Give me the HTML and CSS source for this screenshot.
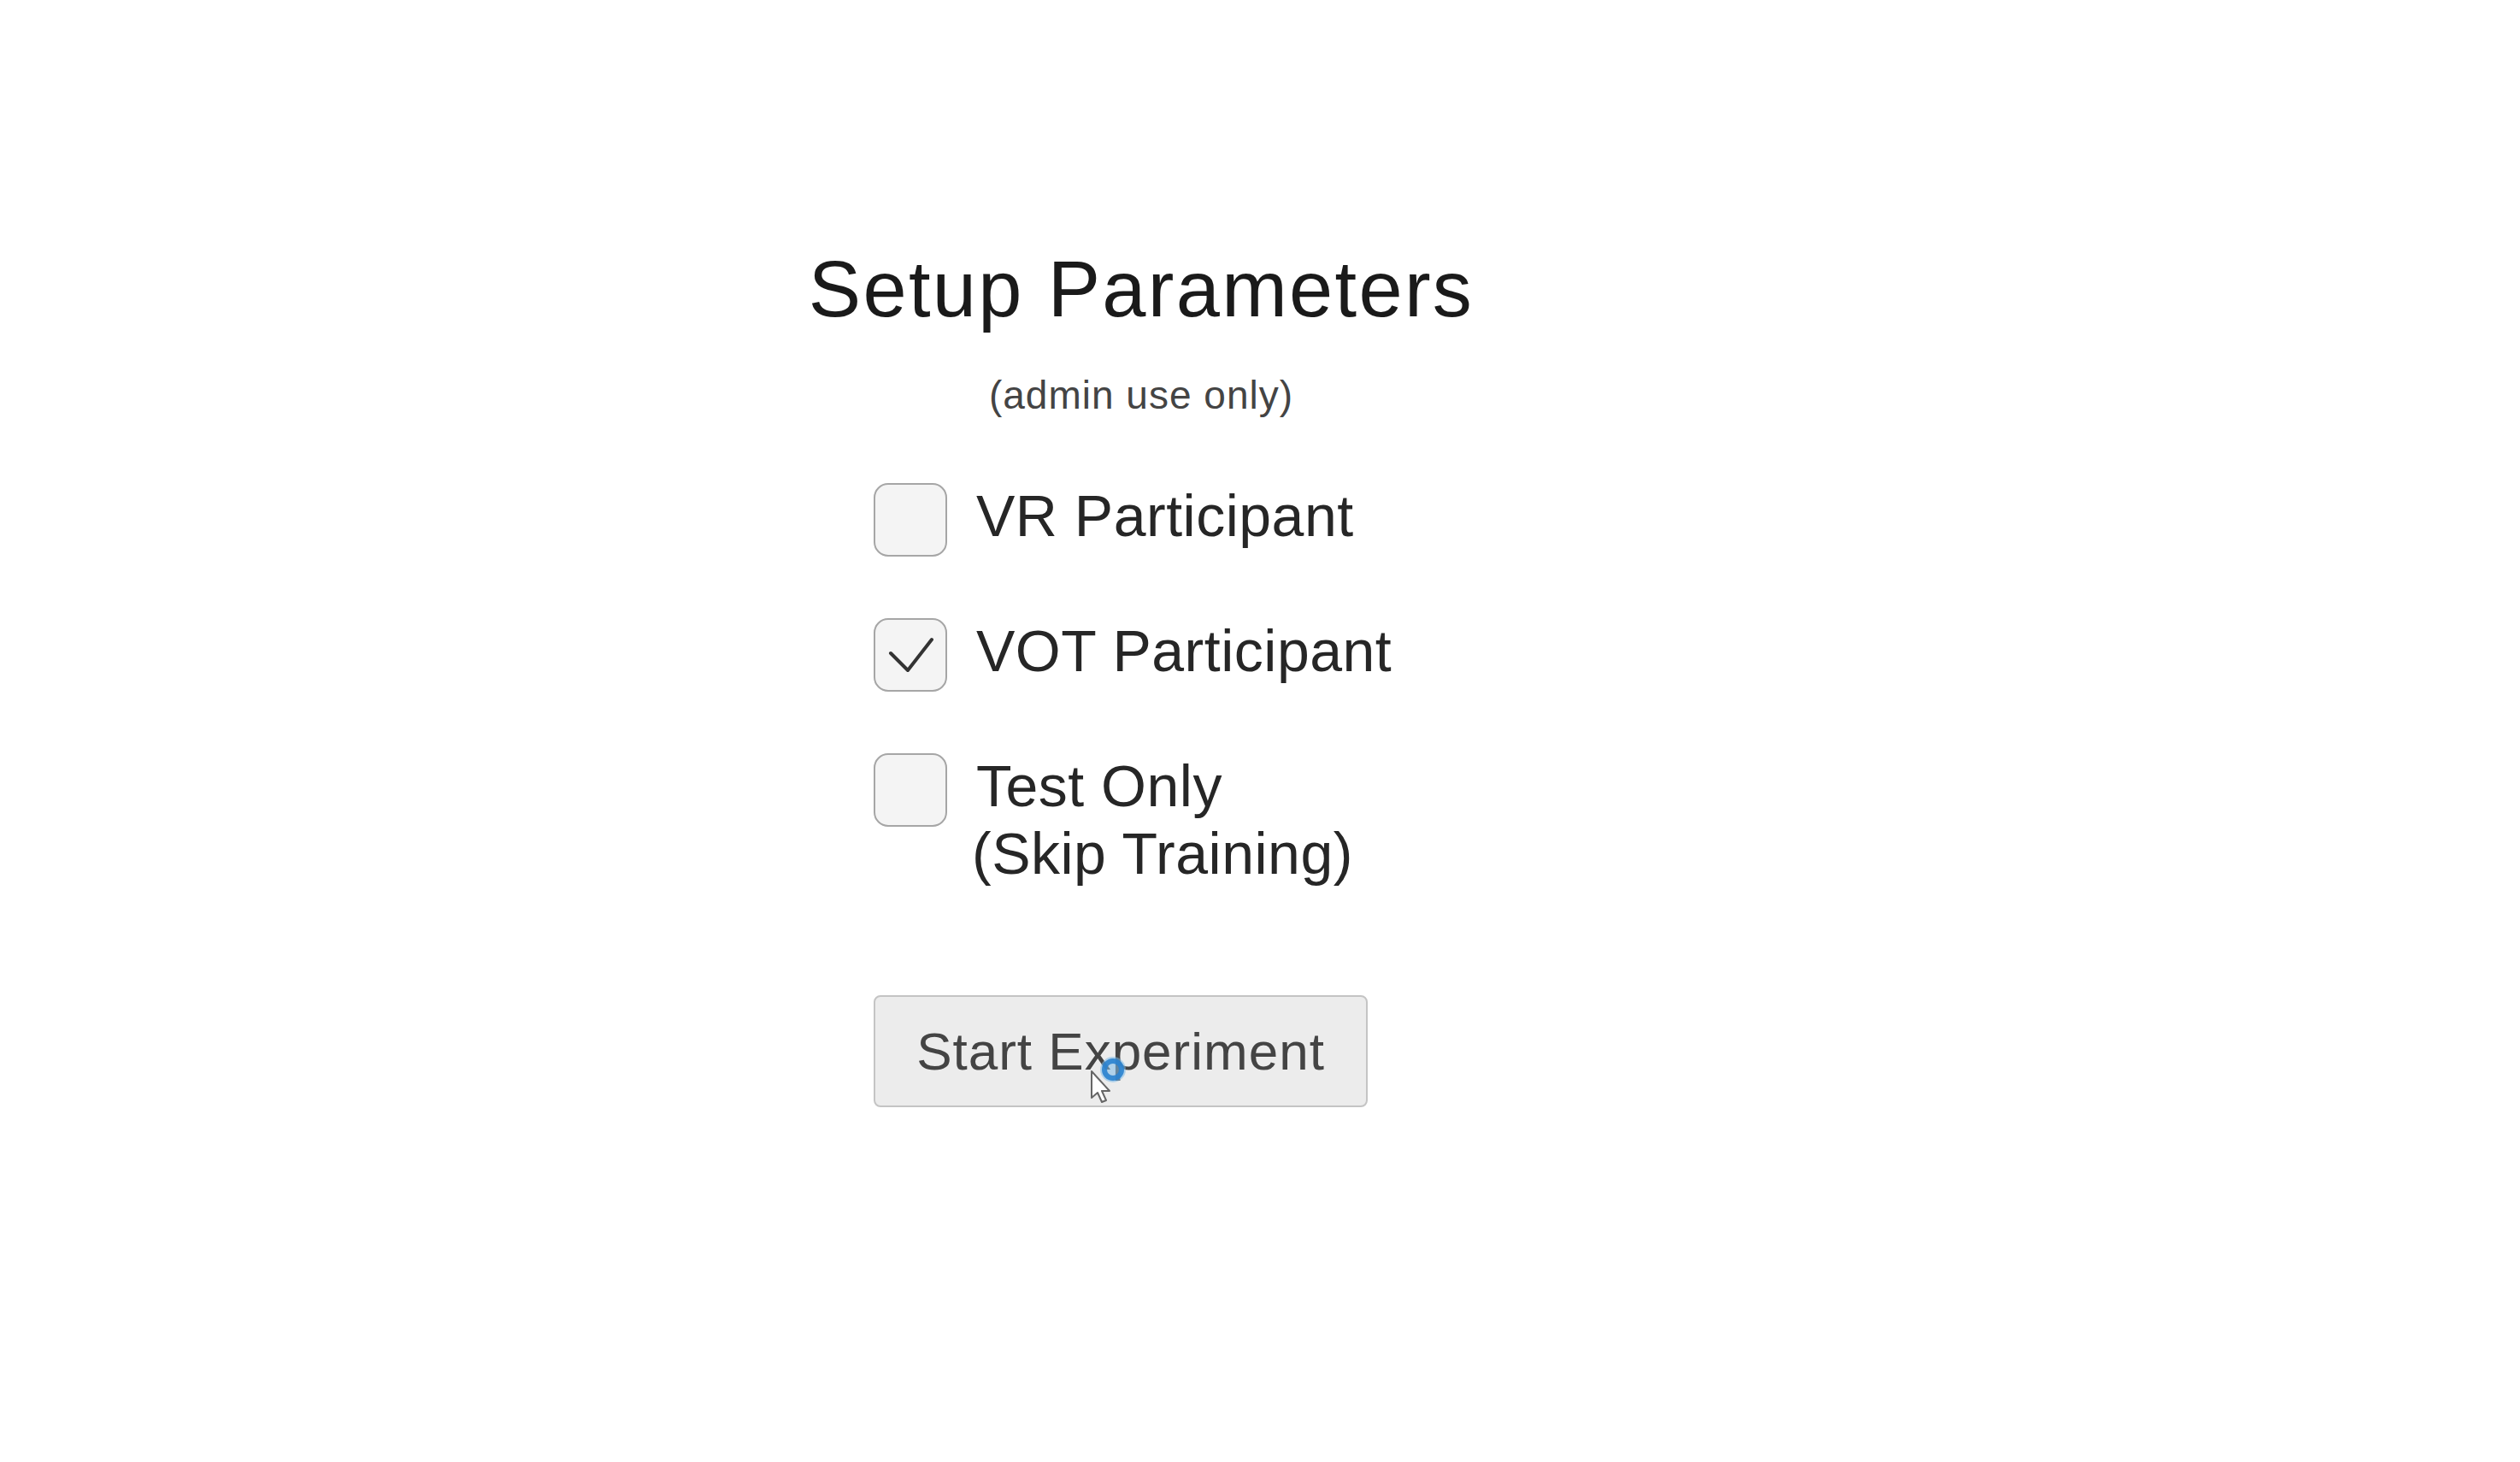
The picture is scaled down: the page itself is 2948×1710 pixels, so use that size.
FILE: index.html
```html
<!DOCTYPE html>
<html lang="en">
<head>
    <meta charset="UTF-8">
    <meta name="viewport" content="width=device-width, initial-scale=1.0">
    <title>Setup Parameters</title>
    <link rel="stylesheet" href="styles.css">
</head>
<body>
    <div class="setup-panel">
        <h1>Setup Parameters</h1>
        <p class="subtitle">(admin use only)</p>

        <div class="options">
            <label class="option">
                <span class="checkbox"></span>
                <span class="option-text">VR Participant</span>
            </label>
            <label class="option">
                <span class="checkbox">
                    <svg viewBox="0 0 86 86" width="86" height="86">
                        <polyline points="20,41 40,61 68,25" fill="none" stroke="#333" stroke-width="4" stroke-linecap="round" stroke-linejoin="round"/>
                    </svg>
                </span>
                <span class="option-text">VOT Participant</span>
            </label>
            <label class="option">
                <span class="checkbox"></span>
                <span class="option-text">Test Only<br>(Skip Training)</span>
            </label>
        </div>

        <div class="button-wrap">
            <button type="button">Start Experiment</button>
            <!-- mouse pointer from the capture -->
            <svg class="pointer" viewBox="0 0 60 60" width="60" height="60">
                <path d="M4 17 L4 48 L11 42 L16 53 L21 51 L16 40 L25 40 Z" fill="#fff" stroke="#666" stroke-width="2" stroke-linejoin="round"/>
                <circle cx="29" cy="15" r="15" fill="#7fbbe8" opacity="0.55"/>
                <circle cx="29" cy="15" r="10" fill="none" stroke="#2a82cf" stroke-width="6" opacity="0.9"/>
            </svg>
        </div>
    </div>
</body>
</html>
```

FILE: styles.css
```css
body {
    margin: 0;
    padding: 0;
    background-color: #fff;
    font-family: "Liberation Sans", Arial, sans-serif;
}
.setup-panel {
    width: 820px;
    margin-left: 925px;
    padding-top: 292px;
}
.setup-panel h1 {
    margin: 0;
    font-size: 92px;
    font-weight: normal;
    line-height: 92px;
    letter-spacing: 2.3px;
    text-align: center;
    color: #1a1a1a;
}
.subtitle {
    margin: 55px 0 0 0;
    font-size: 46px;
    line-height: 46px;
    letter-spacing: 1px;
    text-align: center;
    color: #444;
}
.options {
    margin-top: 80px;
    padding-left: 97px;
    display: flex;
    flex-direction: column;
    gap: 72px;
}
.option {
    display: flex;
    align-items: flex-start;
    gap: 34px;
}
.checkbox {
    width: 82px;
    height: 82px;
    flex: none;
    border: 2px solid #a6a6a6;
    border-radius: 17px;
    background-color: #f4f4f4;
    position: relative;
}
.checkbox svg {
    position: absolute;
    left: -2px;
    top: -2px;
}
.option-text {
    margin-top: -1px;
    margin-left: -5px;
    text-indent: 5px;
    font-size: 68px;
    line-height: 79px;
    letter-spacing: 0.5px;
    color: #262626;
}
.button-wrap {
    margin-top: 126px;
    padding-left: 97px;
    position: relative;
}
button {
    width: 578px;
    height: 131px;
    padding: 0;
    border: 2px solid #c4c4c4;
    border-radius: 8px;
    background-color: #ececec;
    font-family: "Liberation Sans", Arial, sans-serif;
    font-size: 62px;
    letter-spacing: 1px;
    color: #444;
    cursor: pointer;
}
.pointer {
    position: absolute;
    left: 348px;
    top: 72px;
}
```
